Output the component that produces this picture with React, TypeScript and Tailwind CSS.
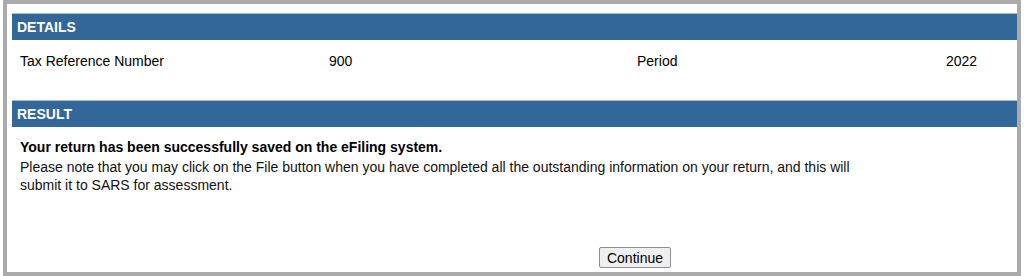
import React from "react";

function SectionHeader({ title }: { title: string }) {
  return (
    <div className="h-[27px] flex items-center bg-[#336699] border-t border-[#9fbdd9] px-[5px] text-white font-bold text-[14px]">
      {title}
    </div>
  );
}

export default function App() {
  return (
    <div className="w-[1024px] h-[276px] bg-white font-['Liberation_Sans',Arial,sans-serif] text-[14px] text-black">
      <div className="ml-[3px] w-[1018px] h-[276px] border-[4px] border-[#ababab] pl-[5px] pt-[9px] flex flex-col">
        {/* Details */}
        <SectionHeader title="DETAILS" />
        <div className="flex pl-[8px] pt-[11px] leading-[20px] h-[60px]">
          <div className="w-[309px]">Tax Reference Number</div>
          <div className="w-[308px]">900</div>
          <div className="w-[309px]">Period</div>
          <div>2022</div>
        </div>

        {/* Result */}
        <SectionHeader title="RESULT" />
        <div className="pl-[8px] pt-[11px]">
          <p className="font-bold leading-[18px]">
            Your return has been successfully saved on the eFiling system.
          </p>
          <p className="mt-[2px] leading-[18px] max-w-[840px] text-[#111]">
            Please note that you may click on the File button when you have
            completed all the outstanding information on your return, and this
            will submit it to SARS for assessment.
          </p>
        </div>
        <div className="mt-[53px] pl-[587px]">
          <button className="h-[21px] w-[72px] bg-[#efefef] border border-[#8f8f8f] rounded-[2px] text-[14px] leading-none">
            Continue
          </button>
        </div>
      </div>
    </div>
  );
}
